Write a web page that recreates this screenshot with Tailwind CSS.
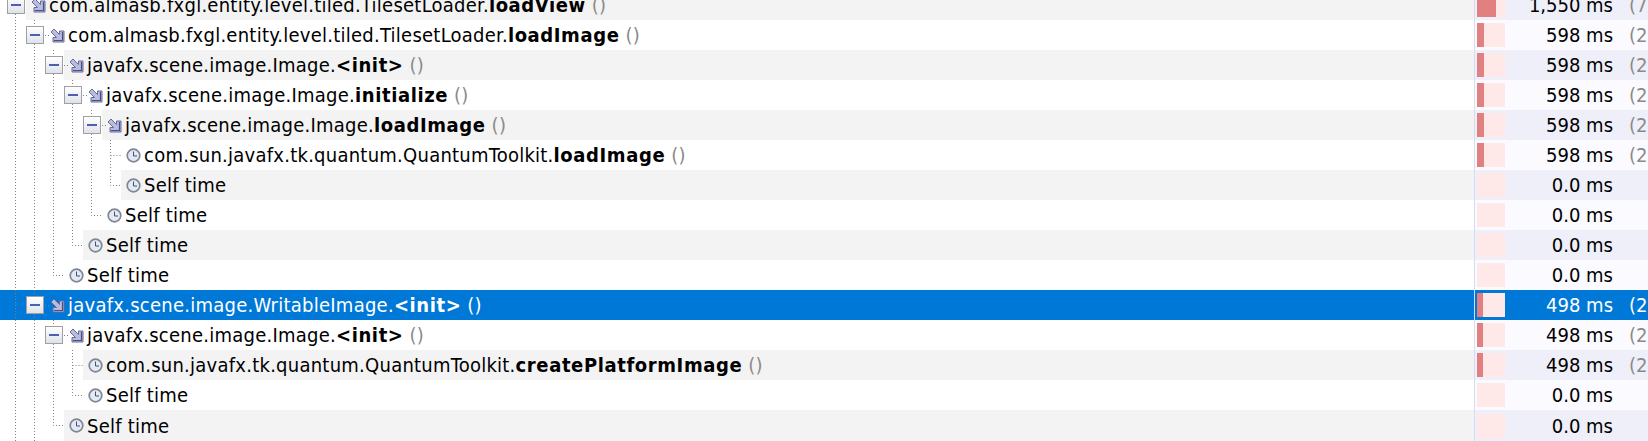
<!DOCTYPE html>
<html lang="en">

<head>
    <meta charset="UTF-8">
    <script src="https://cdn.jsdelivr.net/npm/@tailwindcss/browser@4"></script>
    <title>Call tree</title>
</head>

<body class="bg-white overflow-hidden h-[441px] font-['DejaVu_Sans_Condensed','DejaVu_Sans',sans-serif] text-[20px] text-black">
    <svg width="0" height="0" class="absolute">
        <defs>
            <g id="arrow">
                <path d="M4 1 L9.5 6.5 V3 H14 V14 H3 V9.5 H6.5 L1 4 Z" fill="#b9bcde" stroke="#666b98" stroke-width="1" />
                <path d="M12.5 4 V12.5 H4" fill="none" stroke="#4a4e80" stroke-width="1.2" />
            </g>
            <g id="clock">
                <circle cx="7.5" cy="7.5" r="6.3" fill="#e3eaf5" stroke="#7f8793" stroke-width="1.7" />
                <path d="M7.5 3.5 V8 H11" fill="none" stroke="#46506a" stroke-width="1" />
            </g>
        </defs>
    </svg>

    <div class="relative mt-[-10px]">
        <!-- row 0 -->
        <div class="flex h-[30px]">
            <div class="flex-1 flex items-center pl-[7px] tracking-[0.25px]">
                <span class="w-[18px] h-[18px] mr-[1px] shrink-0 border border-[#a0a0a0] bg-linear-to-b from-white to-[#dfe2ec] flex items-center justify-center"><span class="w-[10px] h-[2px] bg-[#4f5fb0]"></span></span>
                <div class="flex-1 h-full flex items-center gap-[3px] bg-[#f3f3f3] pl-[5px] whitespace-pre"><svg width="15" height="15" class="shrink-0"><use href="#arrow" /></svg><span>com.almasb.fxgl.entity.level.tiled.TilesetLoader.<b class="tracking-[0.6px]">loadView</b> <span class="text-[#8a8a8a]">()</span></span></div>
            </div>
            <div class="w-[174px] shrink-0 flex items-center bg-[#eeeff8] border-l border-[#d5dcf5] pl-[2px] whitespace-pre">
                <div class="w-[28px] h-[24px] shrink-0 bg-[#ffe8e8]"><div class="h-full w-[19px] bg-[#e08080]"></div></div>
                <span class="w-[108px] shrink-0 text-right">1,550 ms</span><span class="ml-[16px] text-[#8a8a8a]">(7</span>
            </div>
        </div>

        <!-- row 1 -->
        <div class="flex h-[30px]">
            <div class="flex-1 flex items-center pl-[26px] tracking-[0.25px]">
                <span class="w-[18px] h-[18px] mr-[1px] shrink-0 border border-[#a0a0a0] bg-linear-to-b from-white to-[#dfe2ec] flex items-center justify-center"><span class="w-[10px] h-[2px] bg-[#4f5fb0]"></span></span>
                <div class="flex-1 h-full flex items-center gap-[3px] pl-[5px] whitespace-pre"><svg width="15" height="15" class="shrink-0"><use href="#arrow" /></svg><span>com.almasb.fxgl.entity.level.tiled.TilesetLoader.<b class="tracking-[0.6px]">loadImage</b> <span class="text-[#8a8a8a]">()</span></span></div>
            </div>
            <div class="w-[174px] shrink-0 flex items-center bg-[#fafaff] border-l border-[#d5dcf5] pl-[2px] whitespace-pre">
                <div class="w-[28px] h-[24px] shrink-0 bg-[#ffe8e8]"><div class="h-full w-[7px] bg-[#e08080]"></div></div>
                <span class="w-[108px] shrink-0 text-right">598 ms</span><span class="ml-[16px] text-[#8a8a8a]">(2</span>
            </div>
        </div>

        <!-- row 2 -->
        <div class="flex h-[30px]">
            <div class="flex-1 flex items-center pl-[45px] tracking-[0.25px]">
                <span class="w-[18px] h-[18px] mr-[1px] shrink-0 border border-[#a0a0a0] bg-linear-to-b from-white to-[#dfe2ec] flex items-center justify-center"><span class="w-[10px] h-[2px] bg-[#4f5fb0]"></span></span>
                <div class="flex-1 h-full flex items-center gap-[3px] bg-[#f3f3f3] pl-[5px] whitespace-pre"><svg width="15" height="15" class="shrink-0"><use href="#arrow" /></svg><span>javafx.scene.image.Image.<b class="tracking-[0.6px]">&lt;init&gt;</b> <span class="text-[#8a8a8a]">()</span></span></div>
            </div>
            <div class="w-[174px] shrink-0 flex items-center bg-[#eeeff8] border-l border-[#d5dcf5] pl-[2px] whitespace-pre">
                <div class="w-[28px] h-[24px] shrink-0 bg-[#ffe8e8]"><div class="h-full w-[7px] bg-[#e08080]"></div></div>
                <span class="w-[108px] shrink-0 text-right">598 ms</span><span class="ml-[16px] text-[#8a8a8a]">(2</span>
            </div>
        </div>

        <!-- row 3 -->
        <div class="flex h-[30px]">
            <div class="flex-1 flex items-center pl-[64px] tracking-[0.25px]">
                <span class="w-[18px] h-[18px] mr-[1px] shrink-0 border border-[#a0a0a0] bg-linear-to-b from-white to-[#dfe2ec] flex items-center justify-center"><span class="w-[10px] h-[2px] bg-[#4f5fb0]"></span></span>
                <div class="flex-1 h-full flex items-center gap-[3px] pl-[5px] whitespace-pre"><svg width="15" height="15" class="shrink-0"><use href="#arrow" /></svg><span>javafx.scene.image.Image.<b class="tracking-[0.6px]">initialize</b> <span class="text-[#8a8a8a]">()</span></span></div>
            </div>
            <div class="w-[174px] shrink-0 flex items-center bg-[#fafaff] border-l border-[#d5dcf5] pl-[2px] whitespace-pre">
                <div class="w-[28px] h-[24px] shrink-0 bg-[#ffe8e8]"><div class="h-full w-[7px] bg-[#e08080]"></div></div>
                <span class="w-[108px] shrink-0 text-right">598 ms</span><span class="ml-[16px] text-[#8a8a8a]">(2</span>
            </div>
        </div>

        <!-- row 4 -->
        <div class="flex h-[30px]">
            <div class="flex-1 flex items-center pl-[83px] tracking-[0.25px]">
                <span class="w-[18px] h-[18px] mr-[1px] shrink-0 border border-[#a0a0a0] bg-linear-to-b from-white to-[#dfe2ec] flex items-center justify-center"><span class="w-[10px] h-[2px] bg-[#4f5fb0]"></span></span>
                <div class="flex-1 h-full flex items-center gap-[3px] bg-[#f3f3f3] pl-[5px] whitespace-pre"><svg width="15" height="15" class="shrink-0"><use href="#arrow" /></svg><span>javafx.scene.image.Image.<b class="tracking-[0.6px]">loadImage</b> <span class="text-[#8a8a8a]">()</span></span></div>
            </div>
            <div class="w-[174px] shrink-0 flex items-center bg-[#eeeff8] border-l border-[#d5dcf5] pl-[2px] whitespace-pre">
                <div class="w-[28px] h-[24px] shrink-0 bg-[#ffe8e8]"><div class="h-full w-[7px] bg-[#e08080]"></div></div>
                <span class="w-[108px] shrink-0 text-right">598 ms</span><span class="ml-[16px] text-[#8a8a8a]">(2</span>
            </div>
        </div>

        <!-- row 5 -->
        <div class="flex h-[30px]">
            <div class="flex-1 flex items-center pl-[121px] tracking-[0.25px]">
                <div class="flex-1 h-full flex items-center gap-[3px] pl-[5px] whitespace-pre"><svg width="15" height="15" class="shrink-0"><use href="#clock" /></svg><span>com.sun.javafx.tk.quantum.QuantumToolkit.<b class="tracking-[0.6px]">loadImage</b> <span class="text-[#8a8a8a]">()</span></span></div>
            </div>
            <div class="w-[174px] shrink-0 flex items-center bg-[#fafaff] border-l border-[#d5dcf5] pl-[2px] whitespace-pre">
                <div class="w-[28px] h-[24px] shrink-0 bg-[#ffe8e8]"><div class="h-full w-[7px] bg-[#e08080]"></div></div>
                <span class="w-[108px] shrink-0 text-right">598 ms</span><span class="ml-[16px] text-[#8a8a8a]">(2</span>
            </div>
        </div>

        <!-- row 6 -->
        <div class="flex h-[30px]">
            <div class="flex-1 flex items-center pl-[121px] tracking-[0.25px]">
                <div class="flex-1 h-full flex items-center gap-[3px] bg-[#f3f3f3] pl-[5px] whitespace-pre"><svg width="15" height="15" class="shrink-0"><use href="#clock" /></svg><span>Self time</span></div>
            </div>
            <div class="w-[174px] shrink-0 flex items-center bg-[#eeeff8] border-l border-[#d5dcf5] pl-[2px] whitespace-pre">
                <div class="w-[28px] h-[24px] shrink-0 bg-[#ffe8e8]"></div>
                <span class="w-[108px] shrink-0 text-right">0.0 ms</span>
            </div>
        </div>

        <!-- row 7 -->
        <div class="flex h-[30px]">
            <div class="flex-1 flex items-center pl-[102px] tracking-[0.25px]">
                <div class="flex-1 h-full flex items-center gap-[3px] pl-[5px] whitespace-pre"><svg width="15" height="15" class="shrink-0"><use href="#clock" /></svg><span>Self time</span></div>
            </div>
            <div class="w-[174px] shrink-0 flex items-center bg-[#fafaff] border-l border-[#d5dcf5] pl-[2px] whitespace-pre">
                <div class="w-[28px] h-[24px] shrink-0 bg-[#ffe8e8]"></div>
                <span class="w-[108px] shrink-0 text-right">0.0 ms</span>
            </div>
        </div>

        <!-- row 8 -->
        <div class="flex h-[30px]">
            <div class="flex-1 flex items-center pl-[83px] tracking-[0.25px]">
                <div class="flex-1 h-full flex items-center gap-[3px] bg-[#f3f3f3] pl-[5px] whitespace-pre"><svg width="15" height="15" class="shrink-0"><use href="#clock" /></svg><span>Self time</span></div>
            </div>
            <div class="w-[174px] shrink-0 flex items-center bg-[#eeeff8] border-l border-[#d5dcf5] pl-[2px] whitespace-pre">
                <div class="w-[28px] h-[24px] shrink-0 bg-[#ffe8e8]"></div>
                <span class="w-[108px] shrink-0 text-right">0.0 ms</span>
            </div>
        </div>

        <!-- row 9 -->
        <div class="flex h-[30px]">
            <div class="flex-1 flex items-center pl-[64px] tracking-[0.25px]">
                <div class="flex-1 h-full flex items-center gap-[3px] pl-[5px] whitespace-pre"><svg width="15" height="15" class="shrink-0"><use href="#clock" /></svg><span>Self time</span></div>
            </div>
            <div class="w-[174px] shrink-0 flex items-center bg-[#fafaff] border-l border-[#d5dcf5] pl-[2px] whitespace-pre">
                <div class="w-[28px] h-[24px] shrink-0 bg-[#ffe8e8]"></div>
                <span class="w-[108px] shrink-0 text-right">0.0 ms</span>
            </div>
        </div>

        <!-- row 10, selected -->
        <div class="flex h-[30px] bg-[#0078d7] text-white">
            <div class="flex-1 flex items-center pl-[26px] tracking-[0.25px]">
                <span class="w-[18px] h-[18px] mr-[1px] shrink-0 border border-[#a0a0a0] bg-linear-to-b from-white to-[#dfe2ec] flex items-center justify-center"><span class="w-[10px] h-[2px] bg-[#4f5fb0]"></span></span>
                <div class="flex-1 h-full flex items-center gap-[3px] pl-[5px] whitespace-pre"><svg width="15" height="15" class="shrink-0"><use href="#arrow" /></svg><span>javafx.scene.image.WritableImage.<b class="tracking-[0.6px]">&lt;init&gt;</b> ()</span></div>
            </div>
            <div class="w-[174px] shrink-0 flex items-center border-l border-[#d5dcf5] pl-[2px] whitespace-pre">
                <div class="w-[28px] h-[24px] shrink-0 bg-[#ffe8e8]"><div class="h-full w-[6px] bg-[#e08080]"></div></div>
                <span class="w-[108px] shrink-0 text-right">498 ms</span><span class="ml-[16px]">(2</span>
            </div>
        </div>

        <!-- row 11 -->
        <div class="flex h-[30px]">
            <div class="flex-1 flex items-center pl-[45px] tracking-[0.25px]">
                <span class="w-[18px] h-[18px] mr-[1px] shrink-0 border border-[#a0a0a0] bg-linear-to-b from-white to-[#dfe2ec] flex items-center justify-center"><span class="w-[10px] h-[2px] bg-[#4f5fb0]"></span></span>
                <div class="flex-1 h-full flex items-center gap-[3px] pl-[5px] whitespace-pre"><svg width="15" height="15" class="shrink-0"><use href="#arrow" /></svg><span>javafx.scene.image.Image.<b class="tracking-[0.6px]">&lt;init&gt;</b> <span class="text-[#8a8a8a]">()</span></span></div>
            </div>
            <div class="w-[174px] shrink-0 flex items-center bg-[#fafaff] border-l border-[#d5dcf5] pl-[2px] whitespace-pre">
                <div class="w-[28px] h-[24px] shrink-0 bg-[#ffe8e8]"><div class="h-full w-[6px] bg-[#e08080]"></div></div>
                <span class="w-[108px] shrink-0 text-right">498 ms</span><span class="ml-[16px] text-[#8a8a8a]">(2</span>
            </div>
        </div>

        <!-- row 12 -->
        <div class="flex h-[30px]">
            <div class="flex-1 flex items-center pl-[83px] tracking-[0.25px]">
                <div class="flex-1 h-full flex items-center gap-[3px] bg-[#f3f3f3] pl-[5px] whitespace-pre"><svg width="15" height="15" class="shrink-0"><use href="#clock" /></svg><span>com.sun.javafx.tk.quantum.QuantumToolkit.<b class="tracking-[0.6px]">createPlatformImage</b> <span class="text-[#8a8a8a]">()</span></span></div>
            </div>
            <div class="w-[174px] shrink-0 flex items-center bg-[#eeeff8] border-l border-[#d5dcf5] pl-[2px] whitespace-pre">
                <div class="w-[28px] h-[24px] shrink-0 bg-[#ffe8e8]"><div class="h-full w-[6px] bg-[#e08080]"></div></div>
                <span class="w-[108px] shrink-0 text-right">498 ms</span><span class="ml-[16px] text-[#8a8a8a]">(2</span>
            </div>
        </div>

        <!-- row 13 -->
        <div class="flex h-[30px]">
            <div class="flex-1 flex items-center pl-[83px] tracking-[0.25px]">
                <div class="flex-1 h-full flex items-center gap-[3px] pl-[5px] whitespace-pre"><svg width="15" height="15" class="shrink-0"><use href="#clock" /></svg><span>Self time</span></div>
            </div>
            <div class="w-[174px] shrink-0 flex items-center bg-[#fafaff] border-l border-[#d5dcf5] pl-[2px] whitespace-pre">
                <div class="w-[28px] h-[24px] shrink-0 bg-[#ffe8e8]"></div>
                <span class="w-[108px] shrink-0 text-right">0.0 ms</span>
            </div>
        </div>

        <!-- row 14 -->
        <div class="flex h-[31px]">
            <div class="flex-1 flex items-center pl-[64px] tracking-[0.25px]">
                <div class="flex-1 h-full flex items-center gap-[3px] bg-[#f3f3f3] pl-[5px] whitespace-pre"><svg width="15" height="15" class="shrink-0"><use href="#clock" /></svg><span>Self time</span></div>
            </div>
            <div class="w-[174px] shrink-0 flex items-center bg-[#eeeff8] border-l border-[#d5dcf5] pl-[2px] whitespace-pre">
                <div class="w-[28px] h-[24px] shrink-0 bg-[#ffe8e8]"></div>
                <span class="w-[108px] shrink-0 text-right">0.0 ms</span>
            </div>
        </div>

        <!-- tree guide lines, over the rows -->
        <svg width="130" height="451" class="absolute left-0 top-0 pointer-events-none" fill="none" stroke="#808080" stroke-dasharray="1 2">
            <g transform="translate(0 10)">
                <path d="M15.5 14 V441" />
                <path d="M34.5 20 V26 M34.5 44 V296 M34.5 314 V441" />
                <path d="M53.5 50 V56 M53.5 74 V275.5 H65 M53.5 320 V326 M53.5 344 V425.5 H65" />
                <path d="M72.5 80 V86 M72.5 104 V245.5 H84 M72.5 350 V395.5 H84 M72.5 365.5 H84" />
                <path d="M91.5 110 V116 M91.5 134 V215.5 H103" />
                <path d="M110.5 140 V185.5 H122 M110.5 155.5 H122" />
                <path d="M45 35.5 H49 M64 65.5 H68 M83 95.5 H87 M102 125.5 H106 M45 305.5 H49 M64 335.5 H68" />
            </g>
        </svg>
    </div>
</body>

</html>
